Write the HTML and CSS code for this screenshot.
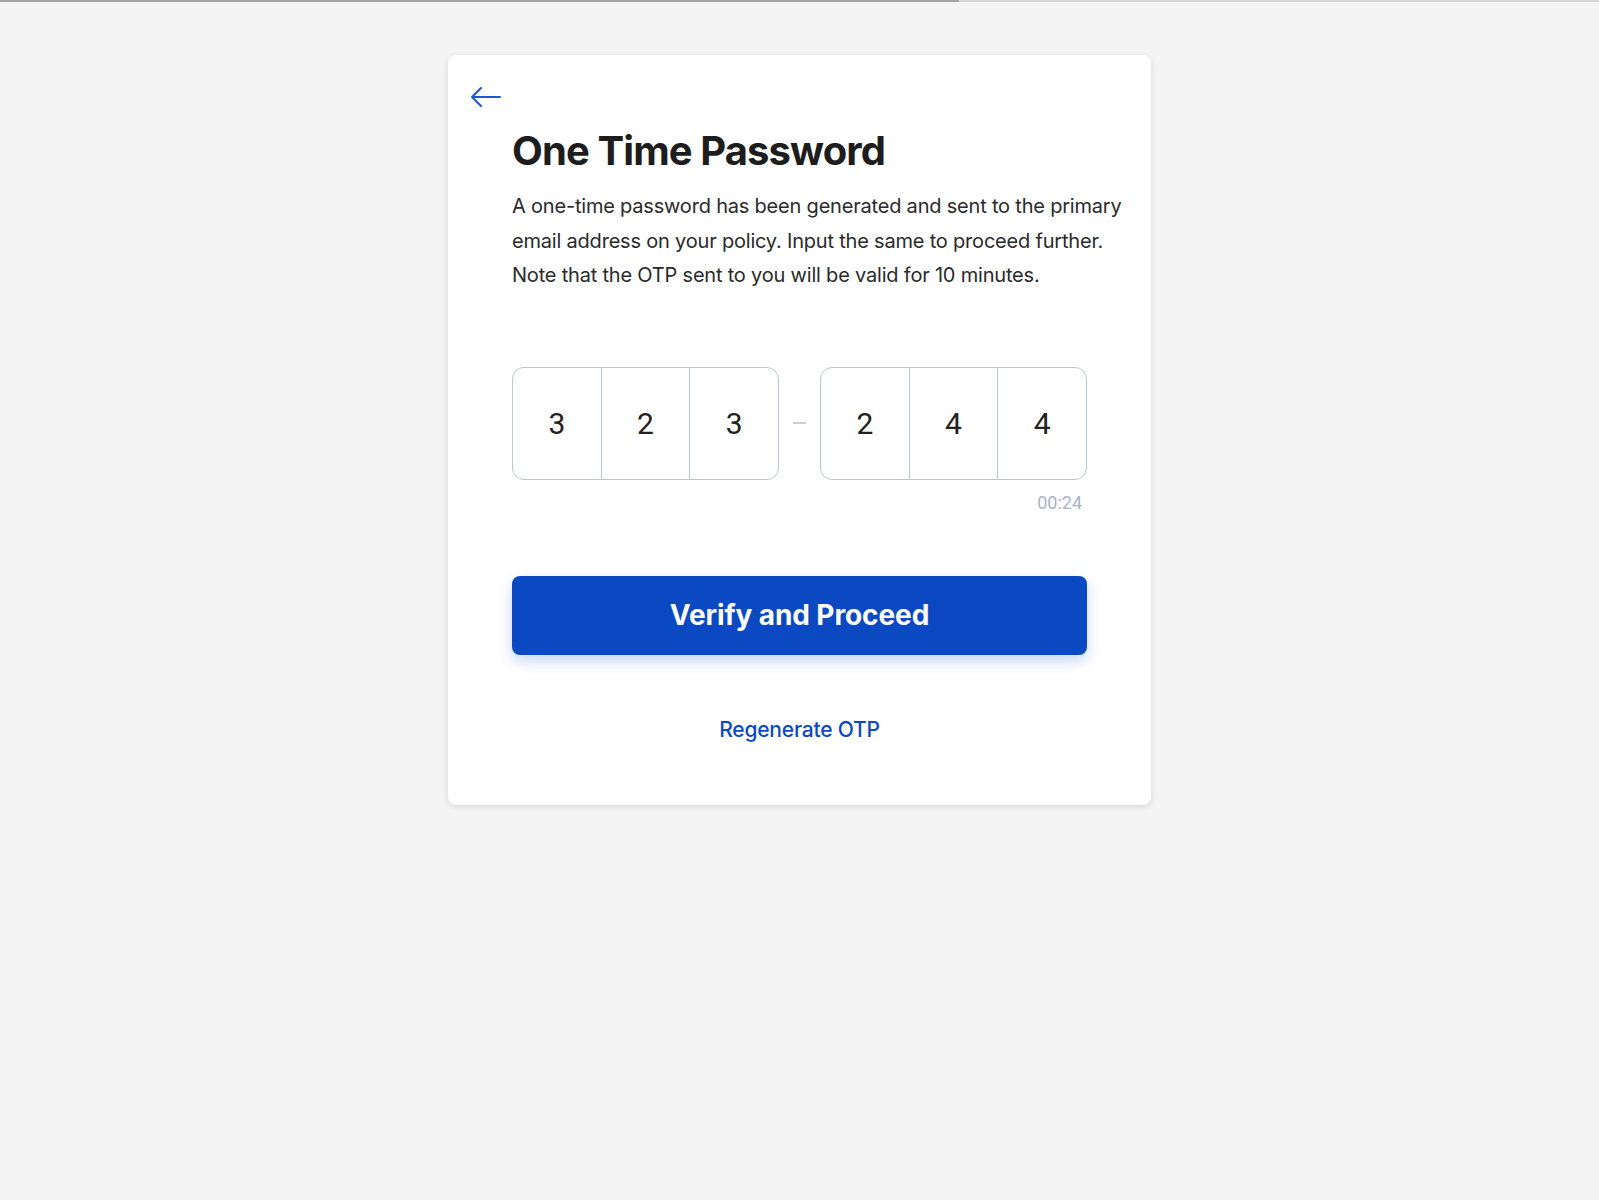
FILE: index.html
```html
<!DOCTYPE html>
<html lang="en">
<head>
<meta charset="utf-8">
<title>One Time Password</title>
<link rel="stylesheet" href="styles.css">
</head>
<body>
<div class="progress"><div class="progress-fill" style="width:60%"></div></div>
<main class="card">
  <button class="back" aria-label="Back">
    <svg width="32" height="22" viewBox="0 0 32 22" fill="none" stroke="currentColor" stroke-width="2" stroke-linecap="round" stroke-linejoin="round">
      <path d="M30 11H2M11 2L2 11l9 9"/>
    </svg>
  </button>
  <div class="content">
    <h1 class="title">One Time Password</h1>
    <p class="desc">A one-time password has been generated and sent to the primary email address on your policy. Input the same to proceed further. Note that the OTP sent to you will be valid for 10 minutes.</p>
    <div class="otp">
      <div class="otp-group">
        <div class="otp-cell">3</div>
        <div class="otp-cell">2</div>
        <div class="otp-cell">3</div>
      </div>
      <span class="otp-dash"></span>
      <div class="otp-group">
        <div class="otp-cell">2</div>
        <div class="otp-cell">4</div>
        <div class="otp-cell">4</div>
      </div>
    </div>
    <div class="timer">00:24</div>
    <button class="verify">Verify and Proceed</button>
    <a class="regen" href="#">Regenerate OTP</a>
  </div>
</main>
</body>
</html>
```
FILE: styles.css
```css
* { box-sizing: border-box; }
html, body { margin: 0; padding: 0; }
body {
  background: #f4f4f4;
  font-family: Inter, "Noto Sans", sans-serif;
  min-height: 1200px;
}
.progress {
  height: 2px;
  background: #d6d6d6;
}
.progress-fill {
  height: 100%;
  background: #a3a3a3;
}
.card {
  width: 703px;
  margin: 53px auto 0;
  background: #ffffff;
  border-radius: 8px;
  box-shadow: 0 2px 6px rgba(0, 0, 0, 0.12);
  padding: 31px 13px 63px 22px;
}
.back {
  display: block;
  border: 0;
  background: none;
  padding: 0;
  height: 22px;
  color: #1f56d4;
  cursor: pointer;
}
.back svg { display: block; }
.content {
  margin-left: 42px;
}
.title {
  margin: 19px 0 0;
  font-size: 40px;
  line-height: 48px;
  font-weight: 700;
  letter-spacing: -0.9px;
  color: #1d1d1d;
}
.desc {
  margin: 14px 0 0;
  font-size: 20px;
  line-height: 34.5px;
  letter-spacing: -0.2px;
  color: #2a2a2a;
}
.otp {
  margin-top: 74px;
  width: 575px;
  display: flex;
  align-items: center;
  justify-content: space-between;
}
.otp-group {
  display: flex;
  border: 1.5px solid #bcc5d8;
  border-radius: 12px;
  height: 113px;
  width: 267px;
}
.otp-cell {
  flex: 1;
  display: flex;
  align-items: center;
  justify-content: center;
  font-family: Roboto, "Noto Sans", sans-serif;
  font-size: 30px;
  color: #222222;
}
.otp-cell + .otp-cell { border-left: 1.5px solid #bcc5d8; }
.otp-dash {
  width: 13px;
  height: 2px;
  background: #c9d0dd;
}
.timer {
  width: 575px;
  margin-top: 12px;
  padding-right: 5px;
  text-align: right;
  font-family: Roboto, "Noto Sans", sans-serif;
  font-size: 18px;
  line-height: 22px;
  color: #a9b3c6;
}
.verify {
  display: block;
  margin-top: 62px;
  width: 575px;
  height: 79px;
  border: 0;
  border-radius: 8px;
  background: #0b49c2;
  color: #ffffff;
  font-family: Inter, "Noto Sans", sans-serif;
  font-size: 28px;
  font-weight: 700;
  letter-spacing: -0.1px;
  box-shadow: 0 6px 14px rgba(11, 73, 194, 0.22);
  cursor: pointer;
}
.regen {
  display: block;
  width: 575px;
  margin-top: 62px;
  text-align: center;
  font-size: 21px;
  line-height: 25px;
  font-weight: 500;
  letter-spacing: -0.2px;
  color: #0b49c2;
  text-decoration: none;
}
```
